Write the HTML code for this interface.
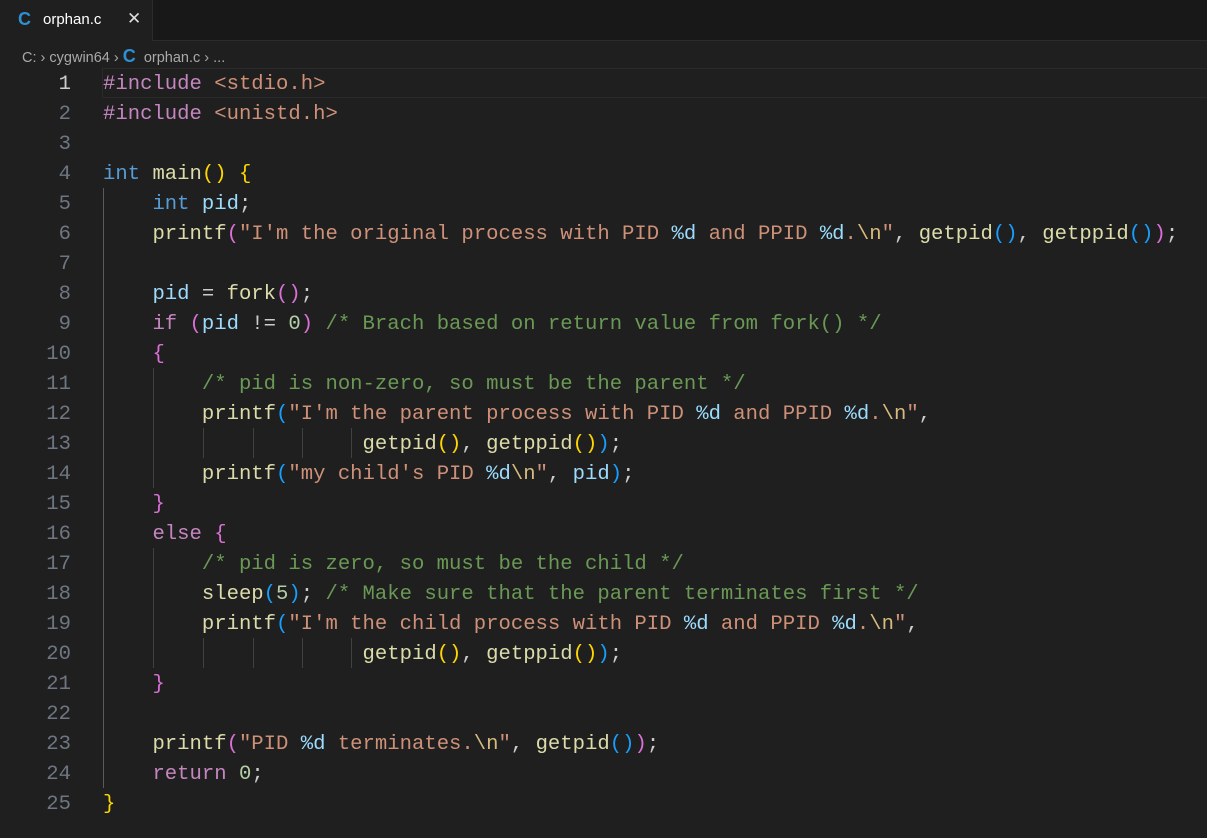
<!DOCTYPE html>
<html><head><meta charset="utf-8"><style>
body{margin:0;width:1207px;height:838px;background:#1f1f1f;overflow:hidden;position:relative;font-family:"Liberation Sans",sans-serif}
.tabbar{position:absolute;left:0;top:0;width:1207px;height:40px;background:#181818;border-bottom:1px solid #2b2b2b}
.tab{position:absolute;left:0;top:0;width:152px;height:41px;background:#1f1f1f;border-right:1px solid #2b2b2b}
.c{position:absolute;color:#2f8fd0;font-weight:bold;font-family:"Liberation Sans",sans-serif}
.tab .t{position:absolute;left:43px;top:11px;color:#fff;font-size:15px}
.tab .x{position:absolute;left:127px;top:9px;color:#ddd;font-size:17px}
.bc{position:absolute;top:46px;left:22px;color:#a9a9a9;font-size:14.5px;white-space:pre}
.code{position:absolute;left:103px;top:70px;font-family:"Liberation Mono",monospace;font-size:20.6px;line-height:30px;white-space:pre;color:#cccccc}
.ln{position:absolute;left:0;width:71px;top:70px;text-align:right;font-family:"Liberation Mono",monospace;font-size:20.6px;line-height:30px;color:#6e7681;white-space:pre}
.cur{position:absolute;left:102px;top:68px;width:1110px;height:28px;border:1px solid #2a2a2a}
.g{position:absolute;width:1px;background:#404040}
.k{color:#569cd6}.p{color:#c586c0}.s{color:#ce9178}.f{color:#dcdcaa}.v{color:#9cdcfe}.cm{color:#6a9955}.n{color:#b5cea8}.e{color:#d7ba7d}
.b1{color:#ffd700}.b2{color:#da70d6}.b3{color:#179fff}
</style></head><body>
<div class="tabbar"></div>
<div class="tab"><span class="c" style="left:18px;top:9px;font-size:18px">C</span><span class="t">orphan.c</span><span class="x">✕</span></div>
<div class="bc">C: <span>›</span> cygwin64 <span>›</span> <span style="color:#2f8fd0;font-weight:bold;font-size:18px">C</span>  orphan.c <span>›</span> ...</div>
<div class="cur"></div>
<div class="g" style="left:103px;top:188px;height:600px;background:#5a5a5a"></div>
<div class="g" style="left:153px;top:368px;height:120px"></div>
<div class="g" style="left:153px;top:548px;height:120px"></div>
<div class="g" style="left:203px;top:428px;height:30px"></div>
<div class="g" style="left:253px;top:428px;height:30px"></div>
<div class="g" style="left:302px;top:428px;height:30px"></div>
<div class="g" style="left:351px;top:428px;height:30px"></div>
<div class="g" style="left:203px;top:638px;height:30px"></div>
<div class="g" style="left:253px;top:638px;height:30px"></div>
<div class="g" style="left:302px;top:638px;height:30px"></div>
<div class="g" style="left:351px;top:638px;height:30px"></div>
<div class="ln"><span style="color:#ccc">1</span>
2
3
4
5
6
7
8
9
10
11
12
13
14
15
16
17
18
19
20
21
22
23
24
25</div>
<div class="code"><span class="p">#include</span> <span class="s">&lt;stdio.h&gt;</span>
<span class="p">#include</span> <span class="s">&lt;unistd.h&gt;</span>

<span class="k">int</span> <span class="f">main</span><span class="b1">()</span> <span class="b1">{</span>
    <span class="k">int</span> <span class="v">pid</span>;
    <span class="f">printf</span><span class="b2">(</span><span class="s">"I'm the original process with PID </span><span class="v">%d</span><span class="s"> and PPID </span><span class="v">%d</span><span class="s">.</span><span class="e">\n</span><span class="s">"</span>, <span class="f">getpid</span><span class="b3">()</span>, <span class="f">getppid</span><span class="b3">()</span><span class="b2">)</span>;

    <span class="v">pid</span> = <span class="f">fork</span><span class="b2">()</span>;
    <span class="p">if</span> <span class="b2">(</span><span class="v">pid</span> != <span class="n">0</span><span class="b2">)</span> <span class="cm">/* Brach based on return value from fork() */</span>
    <span class="b2">{</span>
        <span class="cm">/* pid is non-zero, so must be the parent */</span>
        <span class="f">printf</span><span class="b3">(</span><span class="s">"I'm the parent process with PID </span><span class="v">%d</span><span class="s"> and PPID </span><span class="v">%d</span><span class="s">.</span><span class="e">\n</span><span class="s">"</span>,
                     <span class="f">getpid</span><span class="b1">()</span>, <span class="f">getppid</span><span class="b1">()</span><span class="b3">)</span>;
        <span class="f">printf</span><span class="b3">(</span><span class="s">"my child's PID </span><span class="v">%d</span><span class="e">\n</span><span class="s">"</span>, <span class="v">pid</span><span class="b3">)</span>;
    <span class="b2">}</span>
    <span class="p">else</span> <span class="b2">{</span>
        <span class="cm">/* pid is zero, so must be the child */</span>
        <span class="f">sleep</span><span class="b3">(</span><span class="n">5</span><span class="b3">)</span>; <span class="cm">/* Make sure that the parent terminates first */</span>
        <span class="f">printf</span><span class="b3">(</span><span class="s">"I'm the child process with PID </span><span class="v">%d</span><span class="s"> and PPID </span><span class="v">%d</span><span class="s">.</span><span class="e">\n</span><span class="s">"</span>,
                     <span class="f">getpid</span><span class="b1">()</span>, <span class="f">getppid</span><span class="b1">()</span><span class="b3">)</span>;
    <span class="b2">}</span>

    <span class="f">printf</span><span class="b2">(</span><span class="s">"PID </span><span class="v">%d</span><span class="s"> terminates.</span><span class="e">\n</span><span class="s">"</span>, <span class="f">getpid</span><span class="b3">()</span><span class="b2">)</span>;
    <span class="p">return</span> <span class="n">0</span>;
<span class="b1">}</span></div>
</body></html>
